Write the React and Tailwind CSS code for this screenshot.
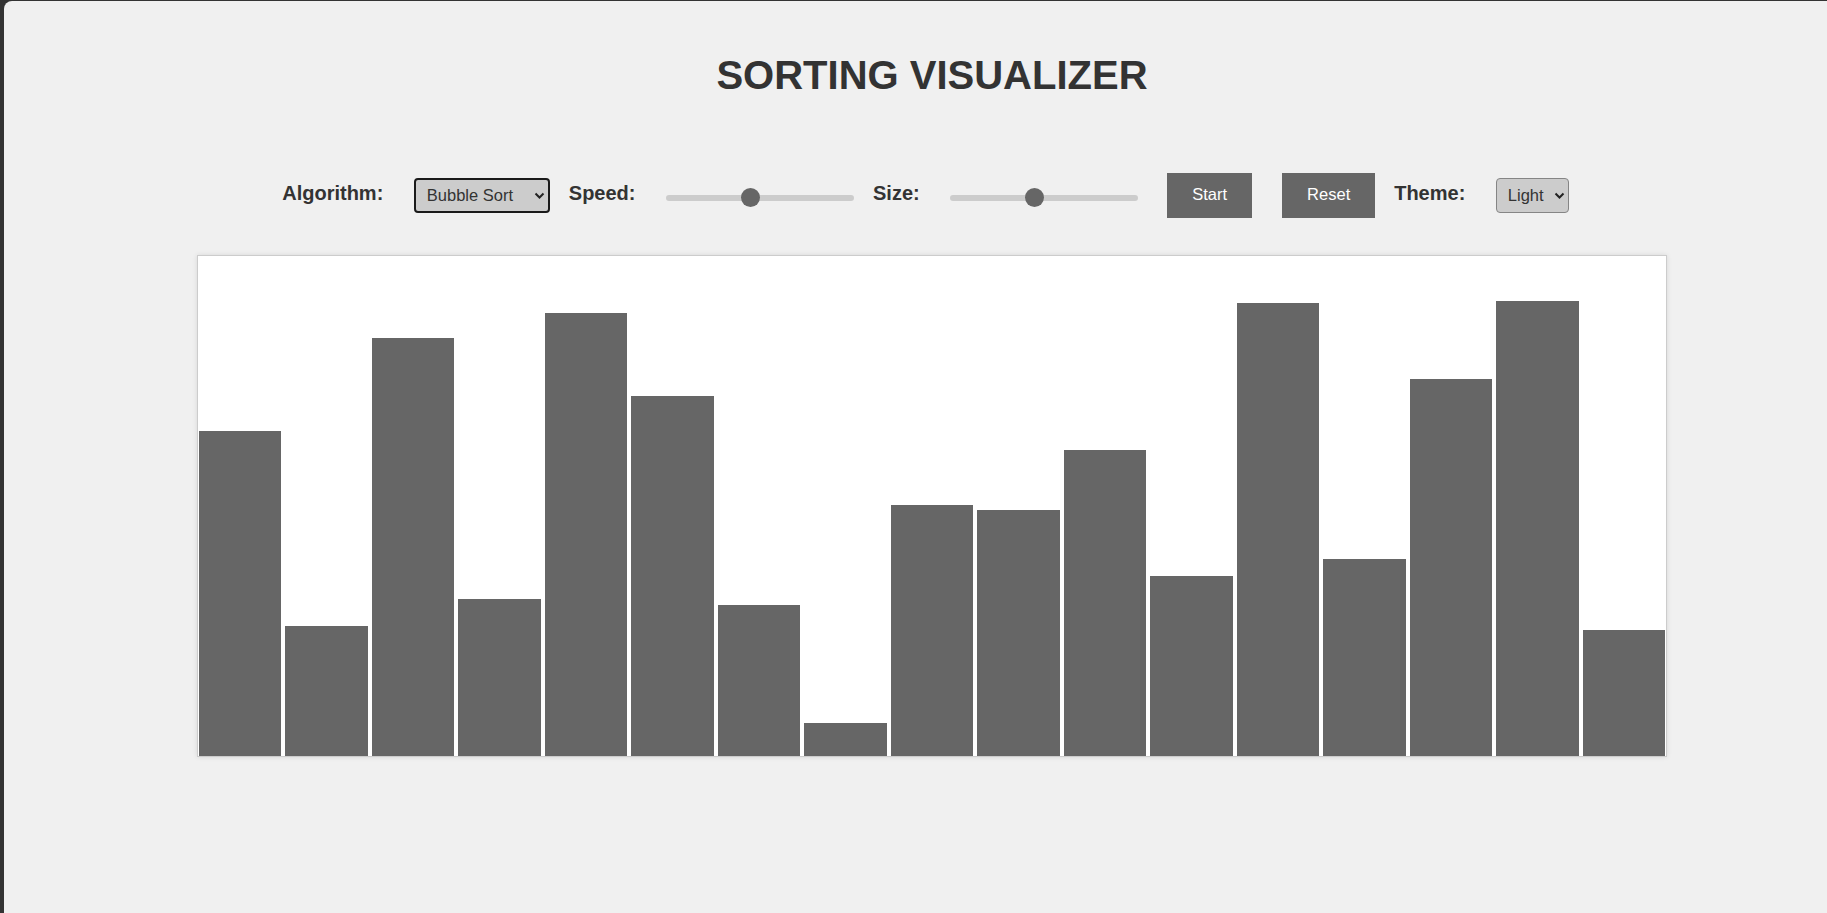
import React from "react";

// bar heights in px, read off the chart (inner height 500)
const bars = [325, 130, 418, 157, 443, 360, 151, 33, 251, 246, 306, 180, 453, 197, 377, 455, 126];

function Chevron() {
  return (
    <svg width="11" height="7" viewBox="0 0 11 7" className="shrink-0">
      <polyline points="1.5,1.5 5.5,5.5 9.5,1.5" fill="none" stroke="#222" strokeWidth="2" />
    </svg>
  );
}

function FakeSelect({ label, className }) {
  return (
    <div
      className={
        "flex h-[35px] shrink-0 items-center justify-between rounded-[4px] bg-[#cccccc] pl-[11px] pr-[3px] text-[16.5px] text-[#333] " +
        className
      }
    >
      <span>{label}</span>
      <Chevron />
    </div>
  );
}

function Slider() {
  return (
    <div className="relative mt-[4px] flex h-[19px] w-[188px] shrink-0 items-center">
      <div className="h-[6px] w-full rounded-full bg-[#cccccc]" />
      <div className="absolute left-[75px] top-0 h-[19px] w-[19px] rounded-full bg-[#666666]" />
    </div>
  );
}

function Label({ children }) {
  return <span className="mb-[5px] mr-[11.5px] shrink-0 text-[20px] font-bold text-[#333]">{children}</span>;
}

export default function App() {
  return (
    <div className="flex h-screen bg-[#333333] pl-[4px] pt-px font-['Liberation_Sans',Arial,sans-serif]">
      <div className="flex-1 overflow-hidden rounded-tl-[8px] bg-[#f0f0f0] pl-[33px] pt-[51px]">
        <h1 className="text-center text-[40px] font-bold leading-[46px] text-[#333]">SORTING VISUALIZER</h1>

        <div className="mt-[75px] flex items-center justify-center gap-[19px] pr-[13px]">
          <Label>Algorithm:</Label>
          <FakeSelect label="Bubble Sort" className="w-[136px] border-2 border-[#1a1a1a]" />
          <Label>Speed:</Label>
          <Slider />
          <Label>Size:</Label>
          <Slider />
          <button type="button" className="ml-[10px] h-[45px] w-[85px] shrink-0 bg-[#666666] pb-[2px] text-[16.5px] text-white">
            Start
          </button>
          <button type="button" className="ml-[11px] h-[45px] w-[93px] shrink-0 bg-[#666666] pb-[2px] text-[16.5px] text-white">
            Reset
          </button>
          <Label>Theme:</Label>
          <FakeSelect label="Light" className="w-[73px] border border-[#858585]" />
        </div>

        <div className="mx-auto mt-[37px] flex h-[502px] w-[1470px] items-end gap-[4px] border border-[#cccccc] bg-white px-px shadow-[0_0_5px_rgba(0,0,0,0.1)]">
          {bars.map((h, i) => (
            <div key={i} className="flex-1 bg-[#666666]" style={{ height: h }} />
          ))}
        </div>
      </div>
    </div>
  );
}
